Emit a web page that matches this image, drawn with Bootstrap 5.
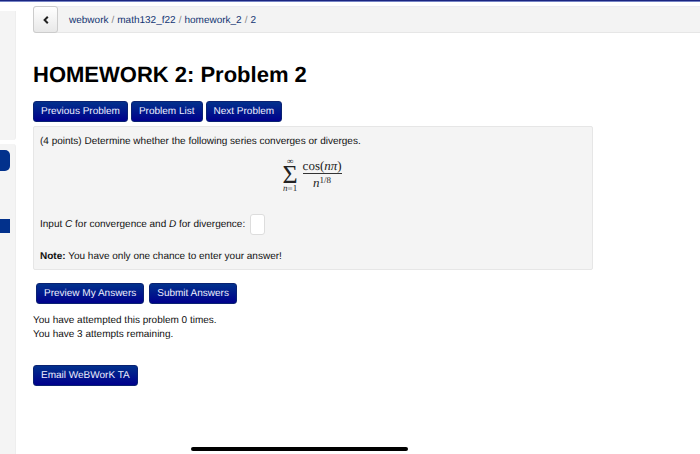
<!DOCTYPE html>
<html lang="en">
<head>
<meta charset="utf-8">
<meta name="viewport" content="width=device-width, initial-scale=1">
<title>HOMEWORK 2: Problem 2</title>
<link href="https://cdn.jsdelivr.net/npm/bootstrap@5.3.0/dist/css/bootstrap.min.css" rel="stylesheet">
<script src="https://cdn.jsdelivr.net/npm/bootstrap@5.3.0/dist/js/bootstrap.bundle.min.js" defer></script>
<style>
  body { font-family: "Liberation Sans", Arial, sans-serif; font-size: 10px; line-height: 14px; color: #111; background: #fff; text-rendering: geometricPrecision; }
  .btn, input { text-rendering: inherit; }
  .topline { height: 2px; background: #1a2580; border-bottom: 1px solid #7482c4; }
  .side { width: 16px; padding-top: 9px; }
  .side-panel { background: #f4f4f4; border-right: 1px solid #eee; }
  .side-first { height: 129px; border-radius: 0 0 3px 0; }
  .side-second { border-radius: 0 3px 0 0; padding-top: 6px; }
  .side-pill { width: 10px; height: 21px; border-radius: 0 5px 5px 0; background: #02318c; }
  .side-link { width: 10px; height: 14px; margin-top: 48px; background: #02318c; }
  .content { padding: 4px 0 20px 17px; }
  .crumbs { background: #f3f3f3; border-top: 1px solid #ececf2; border-bottom: 1px solid #e6e6e6; border-radius: 3px 0 0 3px; }
  .back { width: 25px; height: 27px; margin: -1px 0; border: 1px solid #ccc; border-radius: 3px; background: linear-gradient(#fff, #e8e8e8); }
  .breadcrumb { --bs-breadcrumb-font-size: 10px; --bs-breadcrumb-item-padding-x: 3px; --bs-breadcrumb-divider-color: #888; padding: 2px 0 0 11px; }
  .breadcrumb a { color: #123472; text-decoration: none; }
  h1 { font-size: 22px; line-height: 26px; font-weight: 700; color: #000; margin: 29px 0 13px; }
  .btn-ww { --bs-btn-font-size: 10px; --bs-btn-padding-x: 7px; --bs-btn-padding-y: 3px; --bs-btn-border-radius: 3px; --bs-btn-color: #eef; --bs-btn-hover-color: #fff; --bs-btn-active-color: #fff; --bs-btn-border-color: #0a2272; height: 21px; background: linear-gradient(#02318c, #00008c); white-space: nowrap; line-height: 14px; }
  .nav-buttons { gap: 3px; }
  .problem { width: 84%; margin-top: 4px; padding: 8px 6px 5px; background: #f4f4f4; border: 1px solid #e6e6e6; border-radius: 2px; }
  .formula { font-family: "Liberation Serif", "Times New Roman", serif; gap: 4px; margin: 9px 0 22px; color: #222; padding-right: 3px; }
  .sum { width: 17px; }
  .limit { font-size: 9px; line-height: 7px; white-space: nowrap; }
  .sigma { font-size: 26px; line-height: 20px; }
  .over { font-size: 13px; line-height: 15px; border-bottom: 1px solid #333; }
  .under { font-size: 13px; line-height: 18px; }
  .under sup { font-size: 9px; line-height: 0; }
  .answer { width: 15px; height: 21px; margin-left: 5px; padding: 0; border: 1px solid #ddd; border-radius: 3px; background: #fff; font-size: 10px; }
  .note { margin: 15px 0 0; }
  .submit-row { gap: 5px; padding: 13px 3px 10px; }
  .attempts { margin-bottom: 23px; }
  .home-bar { left: 27%; width: 31%; bottom: 3px; height: 4px; border-radius: 2px; background: #000; margin-left: 2px; }
</style>
</head>
<body class="d-flex flex-column min-vh-100">
<div class="topline"></div>
<div class="d-flex flex-grow-1">
  <aside class="side d-flex flex-column flex-shrink-0 gap-1">
    <div class="side-panel side-first"></div>
    <div class="side-panel side-second flex-grow-1">
      <div class="side-pill"></div>
      <div class="side-link"></div>
    </div>
  </aside>
  <main class="content flex-grow-1">
    <nav class="crumbs d-flex align-items-center" aria-label="breadcrumb">
      <button type="button" class="back d-flex align-items-center justify-content-center p-0" aria-label="Back">
        <svg width="6" height="8" viewBox="0 0 6 8" fill="none" stroke="#222" stroke-width="2"><path d="M4.8 .8 1.6 4l3.2 3.2"/></svg>
      </button>
      <ol class="breadcrumb mb-0">
        <li class="breadcrumb-item"><a href="#">webwork</a></li>
        <li class="breadcrumb-item"><a href="#">math132_f22</a></li>
        <li class="breadcrumb-item"><a href="#">homework_2</a></li>
        <li class="breadcrumb-item"><a href="#">2</a></li>
      </ol>
    </nav>
    <h1>HOMEWORK 2: Problem 2</h1>
    <div class="nav-buttons d-flex">
      <a href="#" class="btn btn-ww">Previous Problem</a>
      <a href="#" class="btn btn-ww">Problem List</a>
      <a href="#" class="btn btn-ww">Next Problem</a>
    </div>
    <form>
      <section class="problem">
        <p class="mb-0">(4 points) Determine whether the following series converges or diverges.</p>
        <div class="formula d-flex justify-content-center align-items-center">
          <div class="sum d-flex flex-column align-items-center">
            <span class="limit">∞</span>
            <span class="sigma">Σ</span>
            <span class="limit"><i>n</i>=1</span>
          </div>
          <div class="text-center">
            <div class="over">cos(<i>nπ</i>)</div>
            <div class="under"><i>n</i><sup>1/8</sup></div>
          </div>
        </div>
        <div class="d-flex align-items-center">
          <label for="ans">Input <i>C</i> for convergence and <i>D</i> for divergence:</label>
          <input id="ans" type="text" class="answer">
        </div>
        <p class="note"><b>Note:</b> You have only one chance to enter your answer!</p>
      </section>
      <div class="submit-row d-flex">
        <button type="button" class="btn btn-ww">Preview My Answers</button>
        <button type="button" class="btn btn-ww">Submit Answers</button>
      </div>
    </form>
    <p class="attempts">You have attempted this problem 0 times.<br>You have 3 attempts remaining.</p>
    <button type="button" class="btn btn-ww">Email WeBWorK TA</button>
  </main>
</div>
<div class="home-bar position-fixed"></div>
</body>
</html>
